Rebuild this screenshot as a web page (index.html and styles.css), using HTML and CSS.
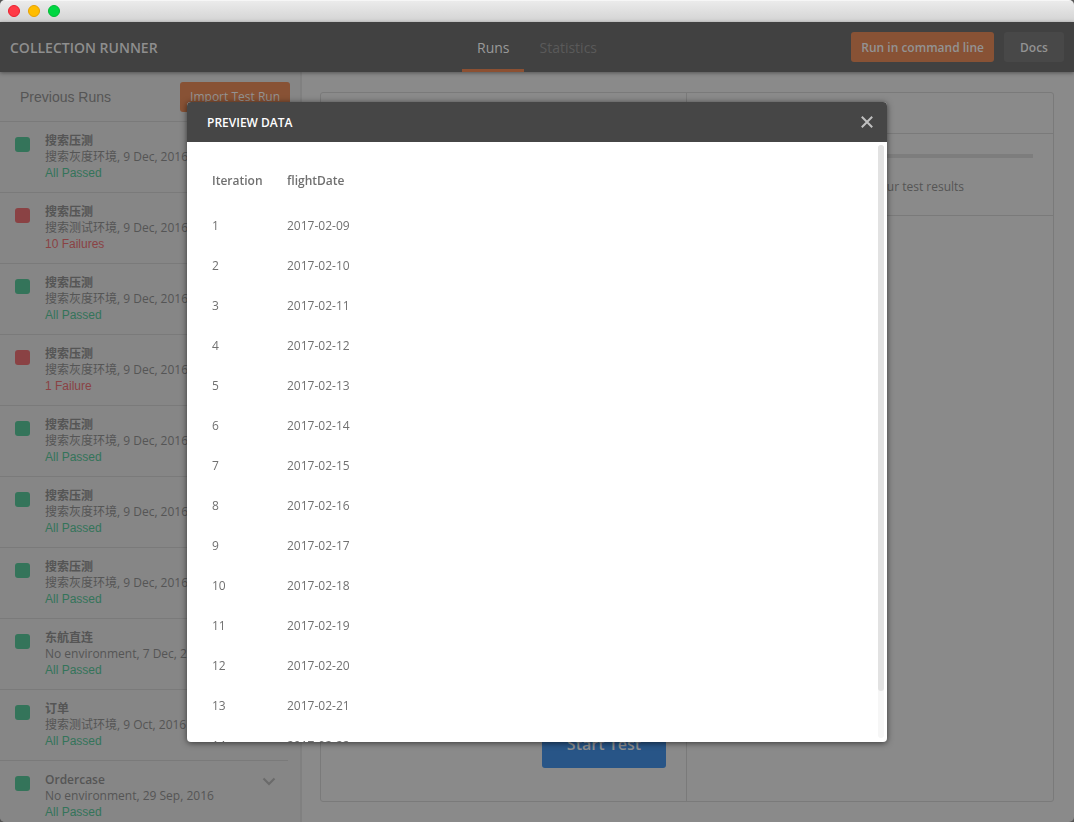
FILE: index.html
```html
<!DOCTYPE html>
<html lang="en">
<head>
<meta charset="utf-8">
<title>Collection Runner</title>
<link rel="stylesheet" href="styles.css">
</head>
<body>
<div class="window">
  <div class="titlebar">
    <span class="light light-close"></span>
    <span class="light light-minimize"></span>
    <span class="light light-zoom"></span>
  </div>
  <header class="header">
    <h1 class="brand">COLLECTION RUNNER</h1>
    <nav class="tabs">
      <a class="tab tab-active" href="#runs">Runs</a>
      <a class="tab" href="#statistics">Statistics</a>
    </nav>
    <div class="actions">
      <button class="btn btn-orange btn-bold" type="button">Run in command line</button>
      <button class="btn btn-docs btn-bold" type="button">Docs</button>
    </div>
  </header>
  <div class="content">
    <aside class="sidebar">
      <div class="sidebar-head">
        <h2 class="sidebar-title">Previous Runs</h2>
        <button class="btn btn-orange btn-import" type="button">Import Test Run</button>
      </div>
      <ul class="runs">
        <li class="run passed"><span class="status"></span><div class="run-text"><strong>搜索压测</strong><span>搜索灰度环境, 9 Dec, 2016</span><span class="result">All Passed</span></div></li>
        <li class="run failed"><span class="status"></span><div class="run-text"><strong>搜索压测</strong><span>搜索测试环境, 9 Dec, 2016</span><span class="result">10 Failures</span></div></li>
        <li class="run passed"><span class="status"></span><div class="run-text"><strong>搜索压测</strong><span>搜索灰度环境, 9 Dec, 2016</span><span class="result">All Passed</span></div></li>
        <li class="run failed"><span class="status"></span><div class="run-text"><strong>搜索压测</strong><span>搜索灰度环境, 9 Dec, 2016</span><span class="result">1 Failure</span></div></li>
        <li class="run passed"><span class="status"></span><div class="run-text"><strong>搜索压测</strong><span>搜索灰度环境, 9 Dec, 2016</span><span class="result">All Passed</span></div></li>
        <li class="run passed"><span class="status"></span><div class="run-text"><strong>搜索压测</strong><span>搜索灰度环境, 9 Dec, 2016</span><span class="result">All Passed</span></div></li>
        <li class="run passed"><span class="status"></span><div class="run-text"><strong>搜索压测</strong><span>搜索灰度环境, 9 Dec, 2016</span><span class="result">All Passed</span></div></li>
        <li class="run passed"><span class="status"></span><div class="run-text"><strong>东航直连</strong><span>No environment, 7 Dec, 2016</span><span class="result">All Passed</span></div></li>
        <li class="run passed"><span class="status"></span><div class="run-text"><strong>订单</strong><span>搜索测试环境, 9 Oct, 2016</span><span class="result">All Passed</span></div></li>
        <li class="run passed"><span class="status"></span><div class="run-text"><strong>Ordercase</strong><span>No environment, 29 Sep, 2016</span><span class="result">All Passed</span></div>
          <button class="expand" type="button" aria-label="Expand run"><svg width="14" height="10" viewBox="0 0 14 10"><path d="M1.500 1.500 7 7l5.500-5.500" fill="none" stroke="currentColor" stroke-width="2"/></svg></button></li>
      </ul>
    </aside>
    <main class="main">
      <div class="panels">
        <section class="panel panel-setup">
          <button class="btn-start" type="button">Start Test</button>
        </section>
        <section class="panel panel-results">
          <div class="results-head"></div>
          <div class="results-body">
            <div class="progress"></div>
            <p class="results-note">Start a run to get your test results</p>
          </div>
        </section>
      </div>
    </main>
  </div>
</div>

<div class="overlay">
  <div class="modal" role="dialog" aria-modal="true" aria-labelledby="modal-title">
    <div class="modal-head">
      <h2 class="modal-title" id="modal-title">PREVIEW DATA</h2>
      <button class="close" type="button" aria-label="Close"><svg width="12" height="12" viewBox="0 0 12 12"><path d="M.8.8l10.400 10.400M11.200.8.8 11.200" fill="none" stroke="currentColor" stroke-width="2"/></svg></button>
    </div>
    <div class="modal-body">
      <table class="data">
        <thead><tr><th class="col-index" scope="col">Iteration</th><th scope="col">flightDate</th></tr></thead>
        <tbody>
          <tr><td>1</td><td>2017-02-09</td></tr>
          <tr><td>2</td><td>2017-02-10</td></tr>
          <tr><td>3</td><td>2017-02-11</td></tr>
          <tr><td>4</td><td>2017-02-12</td></tr>
          <tr><td>5</td><td>2017-02-13</td></tr>
          <tr><td>6</td><td>2017-02-14</td></tr>
          <tr><td>7</td><td>2017-02-15</td></tr>
          <tr><td>8</td><td>2017-02-16</td></tr>
          <tr><td>9</td><td>2017-02-17</td></tr>
          <tr><td>10</td><td>2017-02-18</td></tr>
          <tr><td>11</td><td>2017-02-19</td></tr>
          <tr><td>12</td><td>2017-02-20</td></tr>
          <tr><td>13</td><td>2017-02-21</td></tr>
          <tr><td>14</td><td>2017-02-22</td></tr>
        </tbody>
      </table>
    </div>
    <div class="scroll-track"><div class="scroll-thumb"></div></div>
  </div>
</div>
</body>
</html>
```

FILE: styles.css
```css
* { box-sizing: border-box; }

body {
  margin: 0;
  background: #555;
  color: #555;
  font: 12px/16px "Open Sans", "Noto Sans CJK SC", sans-serif;
}

h1, h2, p, ul { margin: 0; padding: 0; }

button {
  border: 0;
  padding: 0;
  background: none;
  font: inherit;
  color: inherit;
}

.window {
  display: flex;
  flex-direction: column;
  height: 100vh;
  overflow: hidden;
  border-radius: 5px;
  background: #8a8a8a;
}

.titlebar {
  display: flex;
  flex: none;
  gap: 8px;
  height: 22px;
  padding: 4px 8px;
  border-top: 1px solid #f6f6f6;
  background: linear-gradient(#ebebeb, #d3d3d3);
}

.light {
  width: 12px;
  height: 12px;
  border: 1px solid;
  border-radius: 50%;
}
.light-close { background: #ff3b47; border-color: #e9202f; }
.light-minimize { background: #ffbd00; border-color: #e6a000; }
.light-zoom { background: #00d742; border-color: #00b935; }

.header {
  position: relative;
  display: grid;
  grid-template-columns: 1fr auto 1fr;
  flex: none;
  align-items: center;
  height: 50px;
  padding: 0 10px;
  background: #414141;
  box-shadow: 0 1px 4px rgba(0, 0, 0, 0.4);
}

.brand {
  padding-top: 2px;
  color: #8e8e8e;
  font-size: 14px;
  font-weight: 600;
  line-height: 20px;
}

.tabs { display: flex; }

.tab {
  height: 50px;
  padding: 0 15px;
  border-bottom: 3px solid transparent;
  color: #5a5a5a;
  font-size: 14px;
  line-height: 52px;
  text-decoration: none;
}
.tab-active {
  border-color: #8c5032;
  color: #999;
}

.actions {
  display: flex;
  justify-content: flex-end;
  gap: 10px;
}

.btn {
  height: 30px;
  padding: 0 10px;
  border-radius: 3px;
  color: #939393;
  line-height: 30px;
}
.btn-bold {
  padding-top: 2px;
  font-weight: 600;
  line-height: 28px;
}
.btn-orange { background: #885235; }
.btn-docs {
  min-width: 60px;
  background: #484848;
}

.content {
  display: flex;
  flex: 1;
  min-height: 0;
}

.sidebar {
  flex: none;
  width: 302px;
  overflow: hidden;
  border-right: 2px solid #808080;
  background: #868686;
}

.sidebar-head {
  display: flex;
  align-items: center;
  justify-content: space-between;
  height: 50px;
  padding: 0 10px 0 20px;
  border-bottom: 1px solid #7a7a7a;
}

.sidebar-title {
  color: #555;
  font: 14px/20px "Liberation Sans", sans-serif;
}

.btn-import { font-weight: 500; }

.runs {
  padding-right: 12px;
  list-style: none;
}

.run {
  display: flex;
  gap: 15px;
  height: 71px;
  padding: 11px 12px 11px 15px;
  border-bottom: 1px solid #7a7a7a;
}

.status {
  flex: none;
  width: 15px;
  height: 15px;
  margin-top: 4px;
  border-radius: 3px;
  background: currentColor;
}

.run-text {
  display: flex;
  flex: 1;
  flex-direction: column;
  color: #555;
  white-space: nowrap;
}
.run-text strong { font-weight: 600; }

.result { font-family: "Liberation Sans", sans-serif; }
.passed, .passed .result { color: #34745a; }
.failed, .failed .result { color: #8a4244; }

.expand {
  align-self: flex-start;
  height: 20px;
  color: #6a6a6a;
}
.expand svg { display: block; }

.main {
  display: flex;
  flex: 1;
  padding: 20px 20px 20px 18px;
}

.panels {
  display: grid;
  grid-template-columns: 1fr 1fr;
  flex: 1;
  border: 1px solid #7a7a7a;
  border-radius: 3px;
}

.panel-setup {
  display: flex;
  align-items: flex-end;
  justify-content: flex-end;
  padding: 0 20px 33px;
  border-right: 1px solid #7a7a7a;
}

.btn-start {
  height: 48px;
  padding: 0 25px;
  border-radius: 3px;
  background: #285587;
  color: #8f8f8f;
  font-size: 16px;
  font-weight: 600;
}

.results-head {
  height: 41px;
  border-bottom: 1px solid #7a7a7a;
}
.results-body {
  padding: 20px 20px 18px;
  border-bottom: 1px solid #7a7a7a;
}
.progress {
  height: 4px;
  background: #7d7d7d;
}
.results-note {
  margin-top: 19px;
  line-height: 20px;
  text-align: center;
}

.overlay {
  position: fixed;
  inset: 0;
  display: flex;
  justify-content: center;
  align-items: flex-start;
  padding: 102px 20px 80px;
}

.modal {
  position: relative;
  display: flex;
  flex-direction: column;
  width: 100%;
  max-width: 700px;
  height: 100%;
  overflow: hidden;
  border-radius: 4px;
  background: #fff;
  box-shadow: 0 1px 6px rgba(0, 0, 0, 0.6);
}

.modal-head {
  display: flex;
  flex: none;
  align-items: center;
  justify-content: space-between;
  height: 40px;
  padding: 0 14px 0 20px;
  background: #464646;
}
.modal-title {
  padding-top: 2px;
  color: #fff;
  font-size: 12px;
  font-weight: 600;
}
.close { color: #c0c0c0; }
.close svg { display: block; }

.modal-body {
  flex: 1;
  min-height: 0;
  overflow-y: auto;
  padding: 14px 25px 0;
  scrollbar-width: none;
}

.data {
  width: 100%;
  border-collapse: collapse;
  color: #707070;
  table-layout: fixed;
}
.data th, .data td {
  height: 40px;
  padding: 0;
  text-align: left;
}
.data th {
  height: 50px;
  font-weight: 600;
}
.col-index { width: 75px; }

.scroll-track {
  position: absolute;
  top: 43px;
  right: 3px;
  bottom: 4px;
  width: 6px;
  border-radius: 3px;
  background: #f6f6f6;
}
.scroll-thumb {
  height: 92%;
  border-radius: 3px;
  background: #e2e2e2;
}
```
